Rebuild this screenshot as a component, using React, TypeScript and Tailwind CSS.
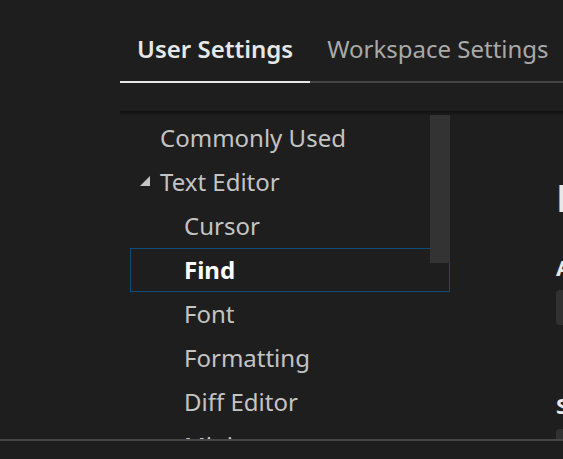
import React from "react";

type TreeItem = {
  label: string;
  level: 1 | 2;
  expanded?: boolean;
  selected?: boolean;
};

const items: TreeItem[] = [
  { label: "Commonly Used", level: 1 },
  { label: "Text Editor", level: 1, expanded: true },
  { label: "Cursor", level: 2 },
  { label: "Find", level: 2, selected: true },
  { label: "Font", level: 2 },
  { label: "Formatting", level: 2 },
  { label: "Diff Editor", level: 2 },
  { label: "Minimap", level: 2 },
];

function Twistie() {
  // expanded twistie, the little corner triangle
  return (
    <svg width="10" height="10" viewBox="0 0 10 10" className="absolute left-[9px] top-[15px]">
      <polygon points="10,0 10,10 0,10" fill="#c5c5c5" />
    </svg>
  );
}

function TreeRow({ item }: { item: TreeItem }) {
  return (
    <div
      className={`relative h-[44px] leading-[42px] text-[24px] whitespace-nowrap border ${
        item.selected ? "border-[#0e4d7b] text-white font-bold" : "border-transparent text-[#c4c4c4]"
      } ${item.level === 1 ? "pl-[29px]" : "pl-[53px]"}`}
    >
      {item.expanded && <Twistie />}
      {item.label}
    </div>
  );
}

export default function App() {
  return (
    <div
      className="w-[563px] h-[459px] bg-[#1e1e1e] overflow-hidden flex flex-col"
      style={{ fontFamily: '"Noto Sans", "Open Sans", sans-serif' }}
    >
      {/* header with tabs */}
      <div className="pl-[120px] pt-[20px] shrink-0">
        <div className="flex items-end text-[24px] leading-[28px] whitespace-nowrap">
          <div className="pt-[15px] pb-[18px] px-[17px] border-b-2 border-[#e7e7e7] text-[#e7e7e7] font-semibold">
            User Settings
          </div>
          <div className="pt-[15px] pb-[18px] px-[17px] border-b-2 border-[#454545] text-[#a9a9a9]">
            Workspace Settings
          </div>
          <div className="flex-1 border-b-2 border-[#454545]" />
        </div>
        <div className="h-[28px]" />
      </div>

      {/* body */}
      <div className="h-[328px] shrink-0 overflow-hidden pl-[120px] relative">
        <div className="absolute left-[120px] right-0 top-0 h-[5px] bg-linear-to-b from-[#111111] to-transparent" />
        <div className="flex">
          <div className="relative w-[330px] shrink-0 pl-[10px] pt-[5px]">
            {items.map((it) => (
              <TreeRow key={it.label} item={it} />
            ))}
            <div className="absolute left-[310px] top-[4px] w-[20px] h-[148px] bg-[#333333]" />
          </div>
          <div className="pl-[106px] flex flex-col whitespace-nowrap">
            <div className="mt-[64px] text-[38px] leading-[44px] font-bold text-[#e7e7e7]">Find</div>
            <div className="mt-[34px] text-[22px] leading-[28px] font-bold text-[#e7e7e7]">Auto Find In Selection</div>
            <div className="mt-[9px] w-[200px] h-[35px] rounded-[4px] bg-[#313131]" />
            <div className="mt-[66px] text-[22px] leading-[28px] font-bold text-[#e7e7e7]">Seed Search String From Selection</div>
            <div className="mt-[10px] w-[200px] h-[35px] rounded-[4px] bg-[#313131]" />
          </div>
        </div>
      </div>

      <div className="h-[2px] shrink-0 bg-[#474747]" />
      <div className="flex-1 bg-[#1e1e1e]" />
    </div>
  );
}
